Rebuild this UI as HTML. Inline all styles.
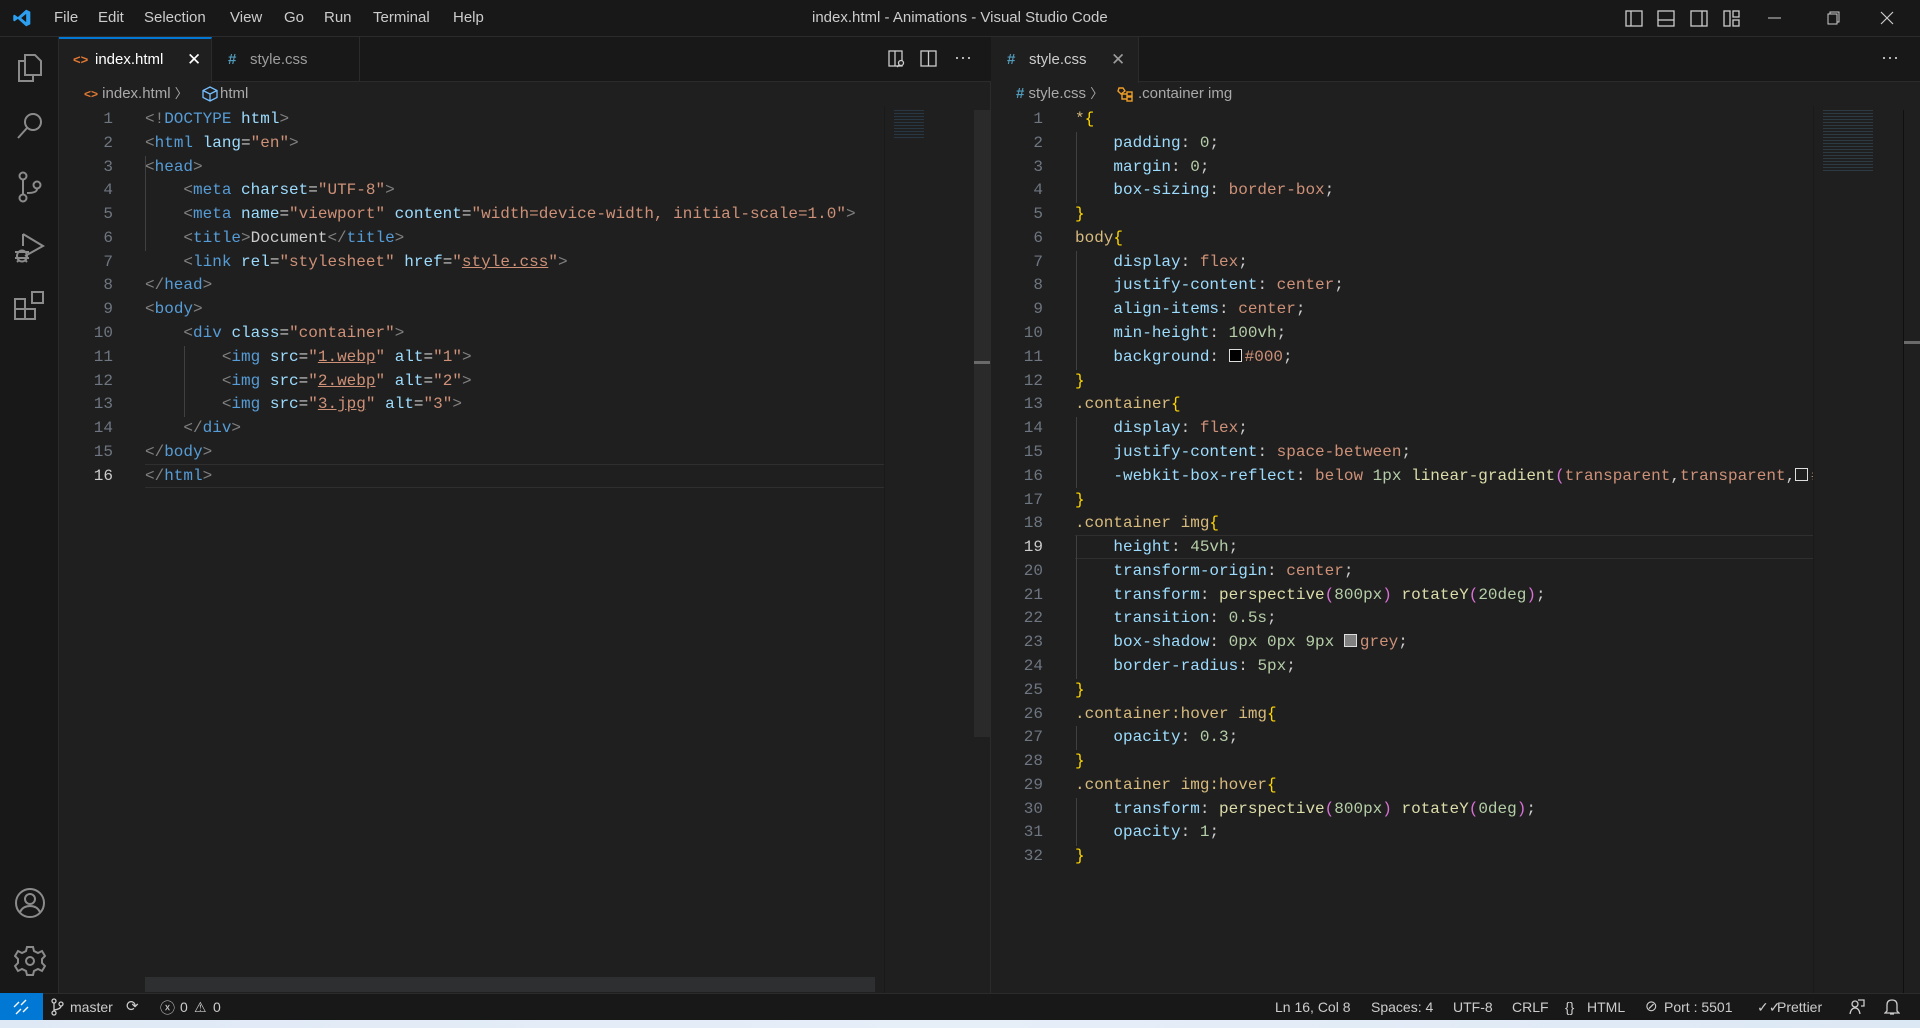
<!DOCTYPE html>
<html><head><meta charset="utf-8"><style>
*{margin:0;padding:0;box-sizing:border-box}
body{width:1920px;height:1028px;overflow:hidden;background:#1f1f1f;font-family:"Liberation Sans",sans-serif;color:#ccc;position:relative}
.abs{position:absolute}
#title{left:0;top:0;width:1920px;height:37px;background:#181818;border-bottom:1px solid #2b2b2b}
.menu{position:absolute;top:9px;font-size:15px;color:#ccc}
#act{left:0;top:37px;width:59px;height:956px;background:#181818;border-right:1px solid #2b2b2b}
#tabs1{left:59px;top:37px;width:932px;height:45px;background:#181818;border-bottom:1px solid #2b2b2b}
#tabs2{left:991px;top:37px;width:929px;height:45px;background:#181818;border-bottom:1px solid #2b2b2b}
.tab{position:absolute;top:0;height:45px;font-size:15px;line-height:45px;border-right:1px solid #2b2b2b}
.code{position:absolute;font-family:"Liberation Mono",monospace;font-size:16px;line-height:23.78px;white-space:pre;overflow:hidden}
.ln{position:absolute;font-family:"Liberation Mono",monospace;font-size:16px;line-height:23.78px;text-align:right;color:#6e7681;white-space:pre}
.p{color:#808080}.t{color:#569cd6}.a{color:#9cdcfe}.s{color:#ce9178}.x{color:#ccc}
.sel{color:#d7ba7d}.br{color:#ffd700}.pr{color:#9cdcfe}.v{color:#ce9178}.n{color:#b5cea8}.f{color:#dcdcaa}.pa{color:#da70d6}.w{color:#ccc}
.u{text-decoration:underline;text-decoration-color:#ce9178}
.sw{display:inline-block;width:13px;height:13px;border:1px solid #ddd;vertical-align:-1px;margin-right:3px}
#status{left:0;top:993px;width:1920px;height:27px;background:#181818;border-top:1px solid #2b2b2b;font-size:14px}
.st{position:absolute;top:5px;color:#ccc}
svg{position:absolute}
</style></head><body>

<div id="title" class="abs">
<svg style="left:12px;top:8px" width="20" height="20" viewBox="0 0 24 24"><path d="M17 2 L22 4.5 V19.5 L17 22 L7 13 L3 16 L1.5 15 V9 L3 8 L7 11 Z M17 7 L11 12 L17 17 Z" fill="#2c9ff0"/></svg>
<span class="menu" style="left:54px">File</span>
<span class="menu" style="left:98px">Edit</span>
<span class="menu" style="left:144px">Selection</span>
<span class="menu" style="left:230px">View</span>
<span class="menu" style="left:284px">Go</span>
<span class="menu" style="left:324px">Run</span>
<span class="menu" style="left:373px">Terminal</span>
<span class="menu" style="left:453px">Help</span>
<span class="menu" style="left:812px">index.html - Animations - Visual Studio Code</span>
<svg style="left:1625px;top:10px" width="18" height="17" viewBox="0 0 18 17"><rect x="1" y="1" width="16" height="15" fill="none" stroke="#ccc" stroke-width="1.3"/><line x1="6" y1="1" x2="6" y2="16" stroke="#ccc" stroke-width="1.3"/></svg>
<svg style="left:1657px;top:10px" width="18" height="17" viewBox="0 0 18 17"><rect x="1" y="1" width="16" height="15" fill="none" stroke="#ccc" stroke-width="1.3"/><line x1="1" y1="10" x2="17" y2="10" stroke="#ccc" stroke-width="1.3"/></svg>
<svg style="left:1690px;top:10px" width="18" height="17" viewBox="0 0 18 17"><rect x="1" y="1" width="16" height="15" fill="none" stroke="#ccc" stroke-width="1.3"/><line x1="12" y1="1" x2="12" y2="16" stroke="#ccc" stroke-width="1.3"/></svg>
<svg style="left:1723px;top:10px" width="18" height="17" viewBox="0 0 18 17"><rect x="1" y="1" width="6" height="15" fill="none" stroke="#ccc" stroke-width="1.3"/><rect x="10" y="1" width="6" height="6" fill="none" stroke="#ccc" stroke-width="1.3"/><rect x="10" y="10" width="6" height="6" fill="none" stroke="#ccc" stroke-width="1.3"/></svg>
<svg style="left:1768px;top:17px" width="14" height="2"><line x1="0" y1="1" x2="13" y2="1" stroke="#ccc"/></svg>
<svg style="left:1827px;top:11px" width="14" height="14" viewBox="0 0 14 14"><rect x="1" y="3" width="9" height="10" fill="none" stroke="#ccc"/><path d="M3 3 V1 H12 V11 H10" fill="none" stroke="#ccc"/></svg>
<svg style="left:1880px;top:11px" width="14" height="14" viewBox="0 0 14 14"><path d="M1 1 L13 13 M13 1 L1 13" stroke="#ccc" stroke-width="1.2"/></svg>
</div>

<div id="act" class="abs">
<svg style="left:15px;top:14px" width="30" height="32" viewBox="0 0 30 32" fill="none" stroke="#8b8b8b" stroke-width="2"><path d="M10 4 H20 L26 10 V24 H10 Z"/><path d="M10 10 H4 V30 H18 V24"/></svg>
<svg style="left:15px;top:74px" width="30" height="30" viewBox="0 0 30 30" fill="none" stroke="#8b8b8b" stroke-width="2"><circle cx="18" cy="11" r="8"/><path d="M12 17 L3 27"/></svg>
<svg style="left:15px;top:134px" width="30" height="32" viewBox="0 0 30 32" fill="none" stroke="#8b8b8b" stroke-width="2"><circle cx="8" cy="5" r="3.5"/><circle cx="8" cy="27" r="3.5"/><circle cx="22" cy="14" r="3.5"/><path d="M8 9 V23 M22 18 Q22 22 12 22"/></svg>
<svg style="left:13px;top:193px" width="34" height="34" viewBox="0 0 34 34" fill="none" stroke="#8b8b8b" stroke-width="2"><path d="M10 4 L30 16 L12 26"/><path d="M10 4 V16"/><ellipse cx="9" cy="26" rx="5" ry="5.5"/><path d="M2 22 H16 M2 28 H16 M4 32 L6 30 M14 32 L12 30"/></svg>
<svg style="left:13px;top:254px" width="34" height="34" viewBox="0 0 34 34" fill="none" stroke="#8b8b8b" stroke-width="2"><rect x="2" y="8" width="10" height="10"/><rect x="2" y="18" width="10" height="10"/><rect x="12" y="18" width="10" height="10"/><rect x="19" y="1" width="11" height="11"/></svg>
<svg style="left:14px;top:850px" width="32" height="32" viewBox="0 0 32 32" fill="none" stroke="#8b8b8b" stroke-width="2"><circle cx="16" cy="16" r="14"/><circle cx="16" cy="12" r="5"/><path d="M6 25 Q9 19 16 19 Q23 19 26 25"/></svg>
<svg style="left:14px;top:908px" width="32" height="32" viewBox="0 0 32 32" fill="none" stroke="#8b8b8b" stroke-width="2"><path d="M13 2 H19 L20 6 L24 8 L28 6 L31 11 L28 14 V18 L31 21 L28 26 L24 24 L20 26 L19 30 H13 L12 26 L8 24 L4 26 L1 21 L4 18 V14 L1 11 L4 6 L8 8 L12 6 Z"/><circle cx="16" cy="16" r="4"/></svg>
</div>

<div id="tabs1" class="abs">
<div class="tab" style="left:0;width:153px;background:#1f1f1f;border-top:2px solid #0078d4;line-height:41px;color:#fff;height:46px">
 <span style="position:absolute;left:14px;color:#e37933;font-size:13px;font-weight:bold">&lt;&gt;</span>
 <span style="position:absolute;left:36px">index.html</span>
 <span style="position:absolute;left:128px;font-size:17px">✕</span>
</div>
<div class="tab" style="left:153px;width:148px;color:#9d9d9d">
 <span style="position:absolute;left:16px;color:#519aba;font-weight:bold">#</span>
 <span style="position:absolute;left:38px">style.css</span>
</div>
<svg style="left:829px;top:13px" width="18" height="18" viewBox="0 0 18 18" fill="none" stroke="#ccc" stroke-width="1.3"><rect x="1" y="1" width="13" height="15"/><line x1="7" y1="1" x2="7" y2="16"/><circle cx="13" cy="13" r="2.5" fill="#1f1f1f"/><path d="M11 15 L9 17"/></svg>
<svg style="left:861px;top:13px" width="18" height="18" viewBox="0 0 18 18" fill="none" stroke="#ccc" stroke-width="1.3"><rect x="1" y="1" width="15" height="15"/><line x1="8.5" y1="1" x2="8.5" y2="16"/></svg>
<span style="position:absolute;left:895px;top:10px;font-size:18px;color:#ccc">···</span>
</div>

<div id="tabs2" class="abs">
<div class="tab" style="left:0;width:148px;background:#1f1f1f;color:#ccc;height:46px">
 <span style="position:absolute;left:16px;color:#519aba;font-weight:bold">#</span>
 <span style="position:absolute;left:38px">style.css</span>
 <span style="position:absolute;left:120px;font-size:17px;color:#9d9d9d">✕</span>
</div>
<span style="position:absolute;left:890px;top:10px;font-size:18px;color:#ccc">···</span>
</div>

<!-- breadcrumbs -->
<div class="abs" style="left:84px;top:85px;font-size:15px;line-height:18px;color:#a9a9a9;white-space:nowrap">
<span style="color:#e37933;font-size:12px;font-weight:bold">&lt;&gt;</span> index.html <span style="font-size:13px">〉</span></div>
<svg style="left:202px;top:86px" width="16" height="16" viewBox="0 0 16 16" fill="none" stroke="#75beff" stroke-width="1.3"><path d="M8 1 L15 4.5 V11.5 L8 15 L1 11.5 V4.5 Z M1 4.5 L8 8 L15 4.5 M8 8 V15"/></svg>
<span class="abs" style="left:220px;top:85px;font-size:15px;line-height:18px;color:#a9a9a9">html</span>

<div class="abs" style="left:1016px;top:85px;font-size:15px;line-height:18px;color:#a9a9a9;white-space:nowrap"><span style="color:#519aba;font-weight:bold">#</span> style.css <span style="font-size:13px">〉</span></div>
<svg style="left:1117px;top:86px" width="18" height="17" viewBox="0 0 18 17" fill="none" stroke="#ee9d28" stroke-width="1.4"><path d="M2 2 L6 2 L8 5 L4 8 L1 5 Z"/><path d="M5 8 V13 H10 M5 8 H10"/><rect x="10" y="6" width="5" height="4"/><rect x="10" y="11" width="5" height="4"/></svg>
<span class="abs" style="left:1138px;top:85px;font-size:15px;line-height:18px;color:#a9a9a9">.container img</span>

<!-- left editor -->
<div class="abs" style="left:145px;top:464px;width:739px;height:24px;border-top:1px solid #2f2f2f;border-bottom:1px solid #2f2f2f"></div>
<div class="abs" style="left:145px;top:156px;width:1px;height:95px;background:#404040"></div>
<div class="abs" style="left:184px;top:346px;width:1px;height:71px;background:#404040"></div>
<div class="ln" style="left:60px;top:108px;width:53px">1
2
3
4
5
6
7
8
9
10
11
12
13
14
15
<span style="color:#ccc">16</span></div>
<div class="code" style="left:145px;top:108px;width:739px"><span class="p">&lt;!</span><span class="t">DOCTYPE</span> <span class="a">html</span><span class="p">&gt;</span>
<span class="p">&lt;</span><span class="t">html</span> <span class="a">lang</span><span class="x">=</span><span class="s">"en"</span><span class="p">&gt;</span>
<span class="p">&lt;</span><span class="t">head</span><span class="p">&gt;</span>
    <span class="p">&lt;</span><span class="t">meta</span> <span class="a">charset</span><span class="x">=</span><span class="s">"UTF-8"</span><span class="p">&gt;</span>
    <span class="p">&lt;</span><span class="t">meta</span> <span class="a">name</span><span class="x">=</span><span class="s">"viewport"</span> <span class="a">content</span><span class="x">=</span><span class="s">"width=device-width, initial-scale=1.0"</span><span class="p">&gt;</span>
    <span class="p">&lt;</span><span class="t">title</span><span class="p">&gt;</span><span class="x">Document</span><span class="p">&lt;/</span><span class="t">title</span><span class="p">&gt;</span>
    <span class="p">&lt;</span><span class="t">link</span> <span class="a">rel</span><span class="x">=</span><span class="s">"stylesheet"</span> <span class="a">href</span><span class="x">=</span><span class="s">"<span class="u">style.css</span>"</span><span class="p">&gt;</span>
<span class="p">&lt;/</span><span class="t">head</span><span class="p">&gt;</span>
<span class="p">&lt;</span><span class="t">body</span><span class="p">&gt;</span>
    <span class="p">&lt;</span><span class="t">div</span> <span class="a">class</span><span class="x">=</span><span class="s">"container"</span><span class="p">&gt;</span>
        <span class="p">&lt;</span><span class="t">img</span> <span class="a">src</span><span class="x">=</span><span class="s">"<span class="u">1.webp</span>"</span> <span class="a">alt</span><span class="x">=</span><span class="s">"1"</span><span class="p">&gt;</span>
        <span class="p">&lt;</span><span class="t">img</span> <span class="a">src</span><span class="x">=</span><span class="s">"<span class="u">2.webp</span>"</span> <span class="a">alt</span><span class="x">=</span><span class="s">"2"</span><span class="p">&gt;</span>
        <span class="p">&lt;</span><span class="t">img</span> <span class="a">src</span><span class="x">=</span><span class="s">"<span class="u">3.jpg</span>"</span> <span class="a">alt</span><span class="x">=</span><span class="s">"3"</span><span class="p">&gt;</span>
    <span class="p">&lt;/</span><span class="t">div</span><span class="p">&gt;</span>
<span class="p">&lt;/</span><span class="t">body</span><span class="p">&gt;</span>
<span class="p">&lt;/</span><span class="t">html</span><span class="p">&gt;</span></div>
<!-- left minimap & scrollbar -->
<div class="abs" style="left:884px;top:106px;width:1px;height:887px;background:#1a1a1a"></div>
<div class="abs" style="left:894px;top:110px;width:30px;height:28px;opacity:.3;background:repeating-linear-gradient(#3d6e99 0 1px,transparent 1px 3px)"></div>
<div class="abs" style="left:974px;top:110px;width:16px;height:627px;background:#2a2a2a"></div>
<div class="abs" style="left:974px;top:361px;width:16px;height:3px;background:#6a6a6a"></div>
<div class="abs" style="left:145px;top:977px;width:730px;height:15px;background:#2e2f30"></div>
<div class="abs" style="left:990px;top:82px;width:1px;height:911px;background:#2b2b2b"></div>

<!-- right editor -->
<div class="abs" style="left:1075px;top:535px;width:738px;height:24px;border-top:1px solid #2f2f2f;border-bottom:1px solid #2f2f2f"></div>
<div class="ln" style="left:990px;top:108px;width:53px">1
2
3
4
5
6
7
8
9
10
11
12
13
14
15
16
17
18
<span style="color:#ccc">19</span>
20
21
22
23
24
25
26
27
28
29
30
31
32</div>
<div class="abs" style="left:1076px;top:132px;width:1px;height:71px;background:#404040"></div>
<div class="abs" style="left:1076px;top:251px;width:1px;height:119px;background:#404040"></div>
<div class="abs" style="left:1076px;top:417px;width:1px;height:71px;background:#404040"></div>
<div class="abs" style="left:1076px;top:536px;width:1px;height:143px;background:#404040"></div>
<div class="abs" style="left:1076px;top:726px;width:1px;height:24px;background:#404040"></div>
<div class="abs" style="left:1076px;top:798px;width:1px;height:48px;background:#404040"></div>
<div class="code" style="left:1075px;top:108px;width:738px"><span class="sel">*</span><span class="br">{</span>
    <span class="pr">padding</span><span class="w">: </span><span class="n">0</span><span class="w">;</span>
    <span class="pr">margin</span><span class="w">: </span><span class="n">0</span><span class="w">;</span>
    <span class="pr">box-sizing</span><span class="w">: </span><span class="v">border-box</span><span class="w">;</span>
<span class="br">}</span>
<span class="sel">body</span><span class="br">{</span>
    <span class="pr">display</span><span class="w">: </span><span class="v">flex</span><span class="w">;</span>
    <span class="pr">justify-content</span><span class="w">: </span><span class="v">center</span><span class="w">;</span>
    <span class="pr">align-items</span><span class="w">: </span><span class="v">center</span><span class="w">;</span>
    <span class="pr">min-height</span><span class="w">: </span><span class="n">100vh</span><span class="w">;</span>
    <span class="pr">background</span><span class="w">: </span><span class="sw" style="background:#000"></span><span class="v">#000</span><span class="w">;</span>
<span class="br">}</span>
<span class="sel">.container</span><span class="br">{</span>
    <span class="pr">display</span><span class="w">: </span><span class="v">flex</span><span class="w">;</span>
    <span class="pr">justify-content</span><span class="w">: </span><span class="v">space-between</span><span class="w">;</span>
    <span class="pr">-webkit-box-reflect</span><span class="w">: </span><span class="v">below</span> <span class="n">1px</span> <span class="f">linear-gradient</span><span class="pa">(</span><span class="v">transparent</span><span class="w">,</span><span class="v">transparent</span><span class="w">,</span><span class="sw" style="background:#1f1f1f"></span><span class="v">#0004</span><span class="pa">)</span><span class="w">;</span>
<span class="br">}</span>
<span class="sel">.container img</span><span class="br">{</span>
    <span class="pr">height</span><span class="w">: </span><span class="n">45vh</span><span class="w">;</span>
    <span class="pr">transform-origin</span><span class="w">: </span><span class="v">center</span><span class="w">;</span>
    <span class="pr">transform</span><span class="w">: </span><span class="f">perspective</span><span class="pa">(</span><span class="n">800px</span><span class="pa">)</span> <span class="f">rotateY</span><span class="pa">(</span><span class="n">20deg</span><span class="pa">)</span><span class="w">;</span>
    <span class="pr">transition</span><span class="w">: </span><span class="n">0.5s</span><span class="w">;</span>
    <span class="pr">box-shadow</span><span class="w">: </span><span class="n">0px 0px 9px</span> <span class="sw" style="background:#808080"></span><span class="v">grey</span><span class="w">;</span>
    <span class="pr">border-radius</span><span class="w">: </span><span class="n">5px</span><span class="w">;</span>
<span class="br">}</span>
<span class="sel">.container:hover img</span><span class="br">{</span>
    <span class="pr">opacity</span><span class="w">: </span><span class="n">0.3</span><span class="w">;</span>
<span class="br">}</span>
<span class="sel">.container img:hover</span><span class="br">{</span>
    <span class="pr">transform</span><span class="w">: </span><span class="f">perspective</span><span class="pa">(</span><span class="n">800px</span><span class="pa">)</span> <span class="f">rotateY</span><span class="pa">(</span><span class="n">0deg</span><span class="pa">)</span><span class="w">;</span>
    <span class="pr">opacity</span><span class="w">: </span><span class="n">1</span><span class="w">;</span>
<span class="br">}</span></div>
<div class="abs" style="left:1813px;top:106px;width:1px;height:887px;background:#1a1a1a"></div>
<div class="abs" style="left:1823px;top:110px;width:50px;height:62px;opacity:.3;background:repeating-linear-gradient(#4a7a9a 0 1px,transparent 1px 3px)"></div>
<div class="abs" style="left:1903px;top:110px;width:1px;height:883px;background:#0f0f0f"></div>
<div class="abs" style="left:1904px;top:341px;width:16px;height:3px;background:#6a6a6a"></div>

<!-- status -->
<div id="status" class="abs">
<div class="abs" style="left:0;top:-1px;width:43px;height:27px;background:#0078d4"></div>
<svg style="left:12px;top:5px" width="18" height="16" viewBox="0 0 18 16" fill="none" stroke="#fff" stroke-width="1.4"><path d="M2 8 L7 3 M4 15 L9 10 M9 6 L14 1 M11 13 L16 8"/></svg>
<svg style="left:50px;top:4px" width="14" height="18" viewBox="0 0 14 18" fill="none" stroke="#ccc" stroke-width="1.3"><circle cx="4" cy="3" r="2"/><circle cx="4" cy="15" r="2"/><circle cx="11" cy="6" r="2"/><path d="M4 5 V13 M11 8 Q11 11 4 12"/></svg>
<span class="st" style="left:70px">master</span>
<span class="st" style="left:126px;font-size:15px;top:3px">⟳</span>
<span class="st" style="left:160px;font-size:15px;top:3px">ⓧ</span>
<span class="st" style="left:180px">0</span>
<span class="st" style="left:194px;font-size:14px">⚠</span>
<span class="st" style="left:213px">0</span>
<span class="st" style="left:1275px">Ln 16, Col 8</span>
<span class="st" style="left:1371px">Spaces: 4</span>
<span class="st" style="left:1453px">UTF-8</span>
<span class="st" style="left:1512px">CRLF</span>
<span class="st" style="left:1565px">{}</span>
<span class="st" style="left:1587px">HTML</span>
<span class="st" style="left:1645px;font-size:15px;top:3px">⊘</span>
<span class="st" style="left:1664px">Port : 5501</span>
<span class="st" style="left:1757px">✓✓</span>
<span class="st" style="left:1777px">Prettier</span>
<svg style="left:1848px;top:4px" width="18" height="18" viewBox="0 0 18 18" fill="none" stroke="#ccc" stroke-width="1.3"><circle cx="7" cy="6" r="3"/><path d="M2 16 Q3 10 7 10 Q11 10 12 16 M10 2 H16 V8 H13"/></svg>
<svg style="left:1884px;top:4px" width="16" height="18" viewBox="0 0 16 18" fill="none" stroke="#ccc" stroke-width="1.3"><path d="M3 13 V7 Q3 2 8 2 Q13 2 13 7 V13 L15 15 H1 Z M6 16 H10"/></svg>
</div>
<div class="abs" style="left:0;top:1020px;width:1920px;height:8px;background:linear-gradient(90deg,#dfe9f5,#e6eef8 50%,#dde8f5)"></div>
</body></html>
